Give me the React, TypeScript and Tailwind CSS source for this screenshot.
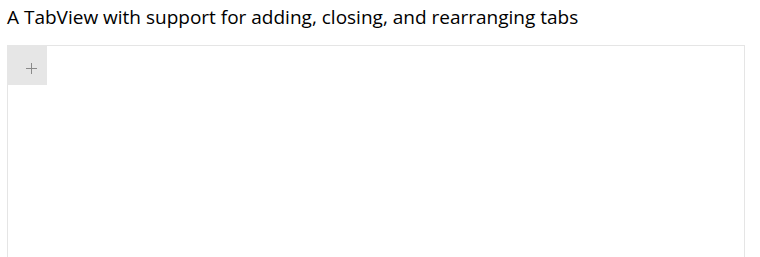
export default function App() {
  return (
    <div className="bg-white w-[760px] h-[257px] overflow-hidden pl-[7px] pt-[4px]" style={{ fontFamily: '"Open Sans", "Noto Sans", sans-serif' }}>
      <div className="text-[19px] leading-[27px] text-black">A TabView with support for adding, closing, and rearranging tabs</div>
      <div className="mt-[14px] w-[738px] h-[240px] border border-[#e5e5e5] border-b-0">
        <div className="flex items-start justify-start w-[40px] h-[40px] -mt-px -ml-px bg-[#e6e6e6] pl-[19px] pt-[18px]">
          <svg width="11" height="11" viewBox="0 0 11 11" className="block">
            <path d="M5.5 0V11M0 5.5H11" stroke="#8a8a8a" strokeWidth="1" />
          </svg>
        </div>
      </div>
    </div>
  );
}
